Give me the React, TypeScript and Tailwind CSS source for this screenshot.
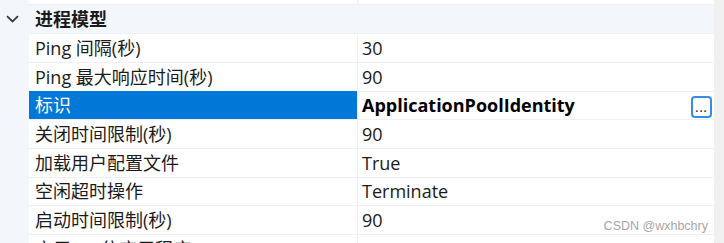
import React from 'react';

interface PropRow {
  label: string;
  value: string;
  selected?: boolean;
  button?: boolean;
}

const rows: PropRow[] = [
  { label: 'Ping 间隔(秒)', value: '30' },
  { label: 'Ping 最大响应时间(秒)', value: '90' },
  { label: '标识', value: 'ApplicationPoolIdentity', selected: true, button: true },
  { label: '关闭时间限制(秒)', value: '90' },
  { label: '加载用户配置文件', value: 'True' },
  { label: '空闲超时操作', value: 'Terminate' },
  { label: '启动时间限制(秒)', value: '90' },
  { label: '启用 32 位应用程序', value: 'True' },
];

const font = "font-['Open_Sans','Noto_Sans_CJK_SC',sans-serif]";

const App: React.FC = () => {
  return (
    <div className={`w-[724px] h-[243px] overflow-hidden flex bg-white relative ${font}`}>
      <div className="w-[714px] flex flex-col">
        {/* tail of the previous row */}
        <div className="flex h-[4.67px] shrink-0">
          <div className="w-[29px] bg-[#f3f6fa]" />
          <div className="w-[328px] border-b border-[#edf1f7]" />
          <div className="w-px bg-[#edf1f7]" />
          <div className="flex-1 border-b border-[#edf1f7]" />
        </div>

        {/* category */}
        <div className="flex h-[28.67px] shrink-0 bg-[#f3f6fa] items-center">
          <div className="w-[29px] flex items-center justify-center pr-[5px]">
            <svg width="13" height="8" viewBox="0 0 13 8" fill="none">
              <path d="M1 1.2 L6.5 6.5 L12 1.2" stroke="#3b3b3b" strokeWidth="1.8" />
            </svg>
          </div>
          <span className="pl-[6px] text-[18px] font-bold text-[#1b1b1b] leading-none">进程模型</span>
        </div>

        {rows.map((r) => (
          <div key={r.label} className="flex h-[28.67px] shrink-0">
            <div className="w-[29px] bg-[#f3f6fa]" />
            <div
              className={`w-[328px] flex items-center pl-[6px] text-[18px] leading-none border-t ${
                r.selected ? 'bg-[#0078d7] text-white border-[#0078d7]' : 'text-[#1b1b1b] border-[#edf1f7]'
              }`}
            >
              {r.label}
            </div>
            <div className="w-px bg-[#edf1f7]" />
            <div className="flex-1 flex items-center justify-between pl-[4px] pr-[2px] border-t border-[#edf1f7] text-[18px] leading-none text-[#1b1b1b]">
              <span className={r.selected ? 'font-bold text-black' : ''}>{r.value}</span>
              {r.button && (
                <div className="w-[21px] h-[22px] mt-[3px] border-2 border-[#3a8be4] rounded-[4px] bg-white flex items-end justify-center pb-[3px]">
                  <span className="text-[11px] leading-none font-bold text-[#333] tracking-[1px]">...</span>
                </div>
              )}
            </div>
          </div>
        ))}
      </div>
      <div className="w-[10px] bg-[#f0f0f0]" />

      <span className="absolute right-[16px] top-[220px] text-[12.5px] leading-none text-[#a6a6a6] font-['Liberation_Sans',sans-serif]">
        CSDN @wxhbchry
      </span>
    </div>
  );
};

export default App;
